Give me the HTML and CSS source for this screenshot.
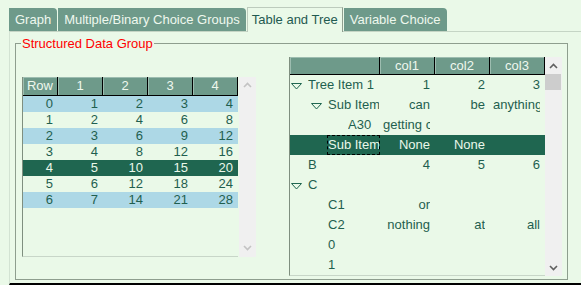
FILE: index.html
```html
<!DOCTYPE html>
<html lang="en">
<head>
    <meta charset="UTF-8">
    <meta name="viewport" content="width=device-width, initial-scale=1.0">
    <title>Table and Tree</title>
    <link rel="stylesheet" href="styles.css">
</head>
<body>
    <div class="tabs">
        <div class="tab">Graph</div>
        <div class="tab">Multiple/Binary Choice Groups</div>
        <div class="tab tab-current">Table and Tree</div>
        <div class="tab">Variable Choice</div>
    </div>

    <div class="pane">
        <fieldset class="group">
            <legend>Structured Data Group</legend>
            <div class="group-body">

                <div class="table-widget">
                    <div class="table">
                        <div class="grid-row table-head">
                            <div class="th">Row</div>
                            <div class="th">1</div>
                            <div class="th">2</div>
                            <div class="th">3</div>
                            <div class="th">4</div>
                        </div>
                        <div id="table-rows"></div>
                    </div>
                    <div class="vscroll">
                        <div class="sb-btn sb-disabled">
                            <svg width="9" height="6" viewBox="0 0 9 6"><polyline points="1,5 4.5,1.5 8,5" fill="none" stroke="currentColor" stroke-width="1.6"/></svg>
                        </div>
                        <div class="sb-space"></div>
                        <div class="sb-btn sb-disabled">
                            <svg width="9" height="6" viewBox="0 0 9 6"><polyline points="1,1 4.5,4.5 8,1" fill="none" stroke="currentColor" stroke-width="1.6"/></svg>
                        </div>
                    </div>
                </div>

                <div class="tree-widget">
                    <div class="tree">
                        <div class="tree-row tree-head">
                            <div class="th"></div>
                            <div class="th">col1</div>
                            <div class="th">col2</div>
                            <div class="th">col3</div>
                        </div>
                        <div id="tree-rows"></div>
                    </div>
                    <div class="vscroll">
                        <div class="sb-btn">
                            <svg width="9" height="6" viewBox="0 0 9 6"><polyline points="1,5 4.5,1.5 8,5" fill="none" stroke="currentColor" stroke-width="1.6"/></svg>
                        </div>
                        <div class="sb-thumb"></div>
                        <div class="sb-space"></div>
                        <div class="sb-btn">
                            <svg width="9" height="6" viewBox="0 0 9 6"><polyline points="1,1 4.5,4.5 8,1" fill="none" stroke="currentColor" stroke-width="1.6"/></svg>
                        </div>
                    </div>
                </div>

            </div>
        </fieldset>
    </div>

    <script>
        // Table: row number and its multiples
        const tableRows = document.getElementById('table-rows');
        for (let i = 0; i < 7; i++) {
            const row = document.createElement('div');
            row.className = 'grid-row';
            if (i % 2 === 0) row.className += ' row-blue';
            if (i === 4) row.className += ' row-selected';
            const values = [i, i + 1, (i + 1) * 2, (i + 1) * 3, (i + 1) * 4];
            row.innerHTML = values.map(v => `<div class="td">${v}</div>`).join('');
            tableRows.appendChild(row);
        }

        // Tree data
        const treeData = [
            { level: 1, open: true, label: 'Tree Item 1', values: ['1', '2', '3'] },
            { level: 2, open: true, label: 'Sub Item', values: ['can', 'be', 'anything'] },
            { level: 3, label: 'A30', values: ['getting complicated', '', ''] },
            { level: 2, label: 'Sub Item', values: ['None', 'None', ''], selected: true },
            { level: 1, label: 'B', values: ['4', '5', '6'] },
            { level: 1, open: true, label: 'C', values: ['', '', ''] },
            { level: 2, label: 'C1', values: ['or', '', ''] },
            { level: 2, label: 'C2', values: ['nothing', 'at', 'all'] },
            { level: 2, label: '0', values: ['', '', ''] },
            { level: 2, label: '1', values: ['', '', ''] }
        ];

        const arrow = '<svg width="11" height="7" viewBox="0 0 11 7"><polygon points="0.5,0.5 10.5,0.5 5.5,6" fill="none" stroke="currentColor" stroke-width="1"/></svg>';

        const treeRows = document.getElementById('tree-rows');
        treeData.forEach(item => {
            const row = document.createElement('div');
            row.className = 'tree-row' + (item.selected ? ' selected' : '');
            row.innerHTML = `
                <div class="tree-main" style="padding-left: ${(item.level - 1) * 20}px">
                    <span class="expander">${item.open ? arrow : ''}</span>
                    <span class="tree-label">${item.label}</span>
                </div>
                ${item.values.map(v => `<div class="tree-cell"><span>${v}</span></div>`).join('')}
            `;
            treeRows.appendChild(row);
        });
    </script>
</body>
</html>
```

FILE: styles.css
```css
* {
    box-sizing: border-box;
}
body {
    margin: 0;
    width: 581px;
    height: 285px;
    overflow: hidden;
    background: #eaf9e8;
    font-family: "Liberation Sans", Arial, sans-serif;
    font-size: 13px;
    color: #1f5f4f;
}
.tabs {
    display: flex;
    align-items: flex-end;
    height: 31px;
    padding: 7px 0 0 9px;
}
.tab {
    height: 23px;
    line-height: 23px;
    padding: 0 6px;
    margin-right: 1px;
    background: #6e9a8a;
    color: #eef8ee;
    border-top-right-radius: 4px;
    white-space: nowrap;
}
.tab-current {
    position: relative;
    z-index: 1;
    height: 25px;
    line-height: 23px;
    padding: 0 4px;
    margin-bottom: -1px;
    background: #eaf9e8;
    color: #1f5a50;
    border: 1px solid #bccbbc;
    border-right-color: #8f9f8f;
    border-bottom: none;
    border-radius: 0;
}
.pane {
    margin-left: 9px;
    height: 254px;
    border-top: 1px solid #c5d5c5;
    border-left: 1px solid #d3e3d3;
    border-bottom: 2px solid #000;
}
.group {
    margin: 4px 0 0 5px;
    width: 553px;
    height: 244px;
    padding: 0 5px;
    border: 1px solid #8e9e8e;
    min-width: 0;
}
.group legend {
    padding: 0 1px;
    color: #ff0000;
}
.group-body {
    display: flex;
    align-items: center;
    gap: 33px;
    height: 228px;
    padding: 3px 0 0 1px;
}

/* table */
.table-widget {
    display: flex;
    gap: 1px;
}
.table {
    width: 216px;
    height: 180px;
    border-left: 1px solid #7f8f7f;
    border-bottom: 1px solid #c8d6c8;
}
.grid-row {
    display: grid;
    grid-template-columns: 35px repeat(4, 45px);
    height: 16px;
    line-height: 16px;
}
.th {
    background: #6e9a8a;
    color: #eef8ee;
    text-align: center;
    border-right: 1px solid #000;
    border-bottom: 1px solid #000;
    box-shadow: inset 1px 1px 0 #9dbdb0;
    overflow: hidden;
    white-space: nowrap;
}
.table-head {
    height: 19px;
    line-height: 18px;
}
.td {
    text-align: right;
    padding-right: 5px;
}
.row-blue {
    background: #add8e6;
}
.row-selected {
    background: #1f6650;
    color: #eaf8ea;
}

/* scrollbars */
.vscroll {
    width: 17px;
    background: #f0f0f0;
    display: flex;
    flex-direction: column;
}
.sb-btn {
    height: 17px;
    display: flex;
    align-items: center;
    justify-content: center;
    color: #606060;
}
.sb-disabled {
    color: #c3c3c3;
}
.sb-thumb {
    height: 16px;
    margin: 0 1px 0 0;
    background: #cdcdcd;
}
.sb-space {
    flex-grow: 1;
}

/* tree */
.tree-widget {
    display: flex;
}
.tree {
    width: 256px;
    height: 219px;
    border-left: 1px solid #7f8f7f;
    border-bottom: 1px solid #c8d6c8;
}
.tree-row {
    display: grid;
    grid-template-columns: 90px repeat(3, 55px);
    height: 20px;
    line-height: 18px;
}
.tree-head {
    height: 18px;
    line-height: 17px;
}
.tree-row.selected {
    background: #1f6650;
    color: #eaf8ea;
}
.tree-main {
    display: flex;
    min-width: 0;
}
.expander {
    flex: none;
    width: 17px;
    display: flex;
    align-items: center;
    padding: 2px 0 0 1px;
    color: #1f6650;
}
.tree-label {
    flex: 1;
    min-width: 0;
    overflow: hidden;
    white-space: nowrap;
    padding-right: 2px;
    border: 1px solid transparent;
}
.tree-row.selected .tree-label {
    border: 1px dashed #000;
}
.tree-cell {
    line-height: 20px;
}
.tree-cell span {
    display: block;
    margin: 0 5px 0 3px;
    overflow: hidden;
    white-space: nowrap;
    text-align: right;
}
```
